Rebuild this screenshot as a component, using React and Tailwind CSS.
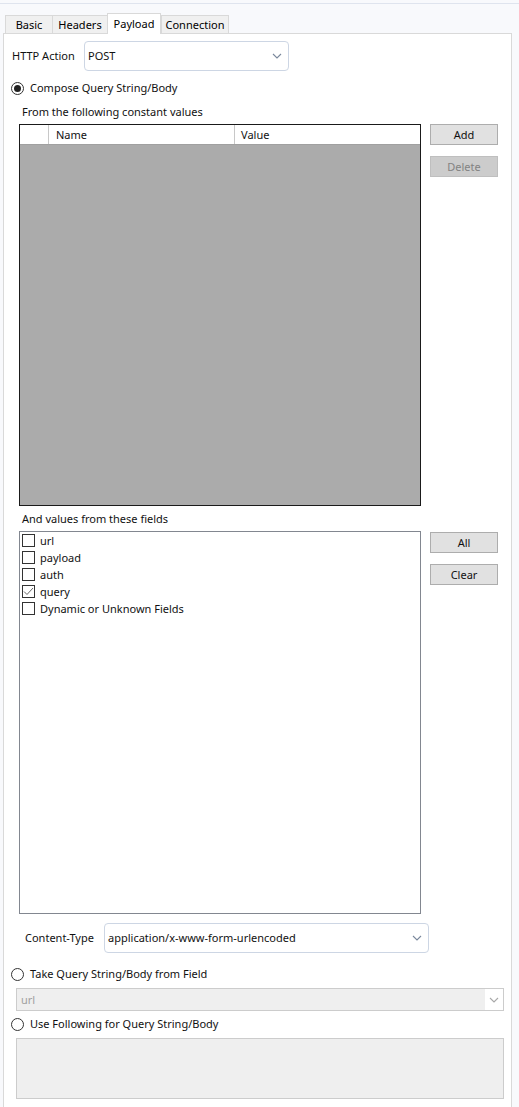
import React from 'react'

const font = { fontFamily: '"Noto Sans", "Open Sans", sans-serif' }

function Chevron({ className = 'stroke-[#7a889c]' }) {
  return (
    <svg width="10" height="6" viewBox="0 0 10 6" className={className} fill="none" strokeWidth="1.1">
      <path d="M1 1 L5 5 L9 1" />
    </svg>
  )
}

function Radio({ checked, label }) {
  return (
    <div className="flex items-center h-[16px] ml-[7px]">
      <span className="w-[13px] h-[13px] rounded-full border border-[#333] bg-white flex items-center justify-center">
        {checked && <span className="w-[7px] h-[7px] rounded-full bg-[#222]" />}
      </span>
      <span className="ml-[6px] text-[#111]">{label}</span>
    </div>
  )
}

function Btn({ children, disabled }) {
  return (
    <div
      className={
        'w-[68px] h-[21px] flex items-center justify-center border ' +
        (disabled ? 'bg-[#cccccc] border-[#bfbfbf] text-[#838383]' : 'bg-[#e1e1e1] border-[#adadad] text-[#111]')
      }
    >
      {children}
    </div>
  )
}

function Check({ checked, label }) {
  return (
    <div className="flex items-center h-[17px] pl-[2px]">
      <span className="w-[13px] h-[13px] border border-[#333] bg-white flex items-center justify-center">
        {checked && (
          <svg width="11" height="9" viewBox="0 0 11 9" fill="none" className="stroke-[#666]" strokeWidth="1">
            <path d="M1 4.5 L4 7.5 L10 1" />
          </svg>
        )}
      </span>
      <span className="ml-[5px] text-[#111]">{label}</span>
    </div>
  )
}

const tabs = [
  { name: 'Basic', w: 'w-[47px]' },
  { name: 'Headers', w: 'w-[55px]' },
  { name: 'Payload', w: 'w-[54px]', active: true },
  { name: 'Connection', w: 'w-[68px]' },
]

export default function App() {
  return (
    <div className="w-[519px] h-[1107px] bg-[#f8f9fc] text-[11px] leading-[16px] flex flex-col overflow-hidden" style={font}>
      <div className="h-[4px] border-b border-[#dfe4ee] shrink-0" />
      <div className="flex items-end ml-[5px] mt-[8px] h-[21px] shrink-0 relative z-10">
        {tabs.map((t) =>
          t.active ? (
            <div
              key={t.name}
              className={t.w + ' h-[21px] bg-white border border-b-0 border-[#d9d9d9] flex justify-center pt-[2px] -mb-px'}
            >
              {t.name}
            </div>
          ) : (
            <div
              key={t.name}
              className={
                t.w +
                ' h-[18px] bg-[#f0f0f0] border-t border-l border-[#d9d9d9] flex justify-center items-center ' +
                (t.name === 'Connection' ? 'border-r' : '')
              }
            >
              {t.name}
            </div>
          )
        )}
      </div>
      <div className="ml-[3px] w-[509px] flex-1 bg-white border-t border-x border-[#d9d9d9] flex flex-col text-[#111]">
        <div className="flex items-center mt-[7px] h-[30px]">
          <span className="ml-[8px] w-[72px]">HTTP Action</span>
          <div className="w-[205px] h-[30px] border border-[#cdd6e4] rounded-[4px] flex items-center justify-between pl-[3px] pr-[6px]">
            <span>POST</span>
            <Chevron />
          </div>
        </div>

        <div className="mt-[9px]">
          <Radio checked label="Compose Query String/Body" />
        </div>

        <div className="mt-[8px] h-[16px] ml-[18px]">From the following constant values</div>

        <div className="flex mt-[4px] ml-[15px]">
          <div className="w-[402px] h-[382px] border border-[#1a1a1a] flex flex-col">
            <div className="h-[20px] bg-white flex border-b border-[#a0a0a0]">
              <div className="w-[29px] border-r border-[#c8c8c8]" />
              <div className="w-[186px] border-r border-[#c8c8c8] pl-[7px] flex items-center">Name</div>
              <div className="flex-1 pl-[6px] flex items-center">Value</div>
            </div>
            <div className="flex-1 bg-[#ababab]" />
          </div>
          <div className="ml-[9px] flex flex-col gap-[11px]">
            <Btn>Add</Btn>
            <Btn disabled>Delete</Btn>
          </div>
        </div>

        <div className="mt-[5px] h-[16px] ml-[18px]">And values from these fields</div>

        <div className="flex mt-[4px] ml-[15px]">
          <div className="w-[402px] h-[383px] border border-[#828790] bg-white">
            <Check label="url" />
            <Check label="payload" />
            <Check label="auth" />
            <Check checked label="query" />
            <Check label="Dynamic or Unknown Fields" />
          </div>
          <div className="ml-[9px] mt-px flex flex-col gap-[11px]">
            <Btn>All</Btn>
            <Btn>Clear</Btn>
          </div>
        </div>

        <div className="flex items-center mt-[9px] h-[30px]">
          <span className="ml-[21px] w-[79px]">Content-Type</span>
          <div className="w-[325px] h-[30px] border border-[#cdd6e4] rounded-[4px] flex items-center justify-between pl-[3px] pr-[6px]">
            <span>application/x-www-form-urlencoded</span>
            <Chevron />
          </div>
        </div>

        <div className="mt-[13px]">
          <Radio label="Take Query String/Body from Field" />
        </div>

        <div className="mt-[6px] ml-[12px] w-[488px] h-[23px] border border-[#cccccc] bg-[#efefef] flex items-center">
          <span className="flex-1 pl-[4px] text-[#a0a0a0]">url</span>
          <div className="w-[18px] h-full bg-white flex items-center justify-center">
            <Chevron className="stroke-[#a8a8a8]" />
          </div>
        </div>

        <div className="mt-[5px]">
          <Radio label="Use Following for Query String/Body" />
        </div>

        <div className="mt-[6px] ml-[12px] w-[488px] h-[61px] border border-[#cccccc] bg-[#efefef]" />
      </div>
    </div>
  )
}
